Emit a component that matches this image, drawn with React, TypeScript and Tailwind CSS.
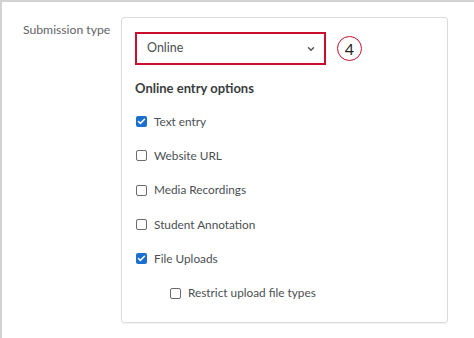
import { ChevronDown, Check } from "lucide-react";

const options = [
  { label: "Text entry", checked: true },
  { label: "Website URL", checked: false },
  { label: "Media Recordings", checked: false },
  { label: "Student Annotation", checked: false },
  { label: "File Uploads", checked: true },
];

function Box({ checked }: { checked: boolean }) {
  return checked ? (
    <span className="flex h-[11px] w-[11px] items-center justify-center rounded-[2px] bg-[#1a6fd1]">
      <Check className="h-[9px] w-[9px] text-white" strokeWidth={4} />
    </span>
  ) : (
    <span className="h-[11px] w-[11px] rounded-[2px] border border-[#6b6b6b] bg-white" />
  );
}

export default function App() {
  return (
    <div
      className="h-[338px] w-[474px] border-l-2 border-t-2 border-[#d2d2d2] bg-white text-[#4b4f54]"
      style={{ fontFamily: "Lato, 'Open Sans', sans-serif" }}
    >
      <div className="flex pt-[15px]">
        <div className="w-[119px] pl-[21px] pt-[4px] text-[12.2px] text-[#5f6368]">Submission type</div>

        <div className="h-[306px] w-[327px] rounded-[3px] border border-[#dcdcdc] pl-[13px] pt-[14px] shadow-[0_1px_1px_rgba(0,0,0,0.06)]">
          <div className="flex items-center">
            <div className="flex h-[33px] w-[191px] items-center justify-between border-2 border-[#c8102e] pl-[10px] pr-[8px] text-[12.5px]">
              <span>Online</span>
              <ChevronDown className="h-[10px] w-[10px] text-[#555]" strokeWidth={3.5} />
            </div>
            <div className="ml-[11px] flex h-[25px] w-[25px] items-center justify-center rounded-full border-[1.5px] border-[#c8102e] text-[16px] text-[#222]">
              4
            </div>
          </div>

          <div className="mt-[14px] text-[13px] font-bold text-[#3a3d40]">Online entry options</div>

          <div className="mt-[6px] flex flex-col">
            {options.map((o) => (
              <div key={o.label} className="flex h-[34.3px] items-center gap-[7px] pl-[1px] text-[11.8px]">
                <Box checked={o.checked} />
                <span>{o.label}</span>
              </div>
            ))}
            <div className="flex h-[34.3px] items-center gap-[7px] pl-[35px] text-[11.8px]">
              <Box checked={false} />
              <span>Restrict upload file types</span>
            </div>
          </div>
        </div>
      </div>
    </div>
  );
}
